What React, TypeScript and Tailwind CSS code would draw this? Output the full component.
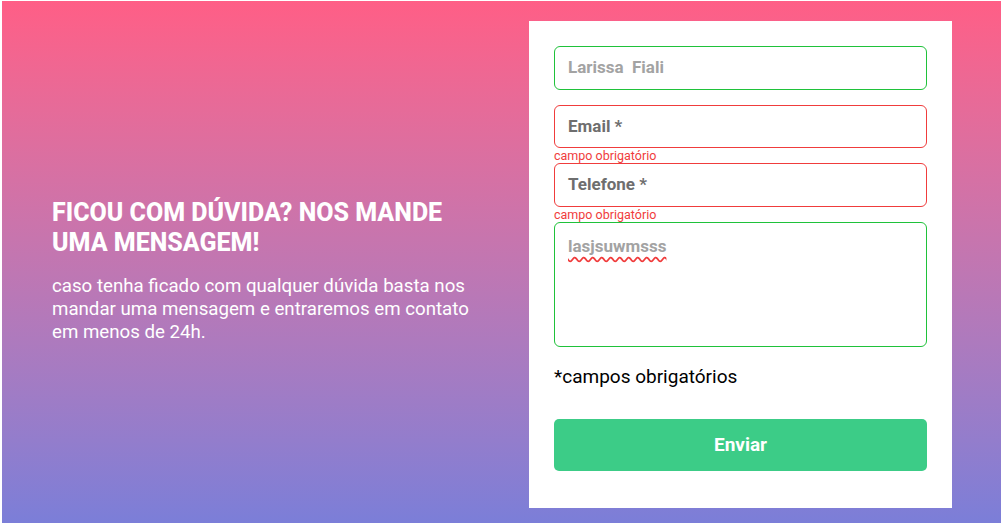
import React from 'react';

const Field = ({ text, tone, error, h = 'h-[44px]' }: { text: string; tone: 'ok' | 'bad'; error?: boolean; h?: string }) => (
  <div>
    <div
      className={`${h} rounded-[6px] border flex items-center pl-[13px] text-[17px] font-bold whitespace-pre ${
        tone === 'ok' ? 'border-[#1fc23a] text-[#a3a3a3]' : 'border-[#f03c3c] text-[#6e6e6e]'
      }`}
    >
      {text}
    </div>
    <div className="h-[15px] text-[12.5px] leading-[15px] text-[#f03c3c]">{error ? 'campo obrigatório' : ''}</div>
  </div>
);

export default function App() {
  return (
    <div className="w-[1001px] h-[523px] bg-white pl-[2px] pt-[1px] font-['Roboto',sans-serif]">
      <div className="h-full flex bg-gradient-to-b from-[#ff5e86] to-[#7b7ed8]">
        <section className="flex-1 flex items-center pl-[50px] pt-[17px]">
          <div className="max-w-[430px] text-white">
            <h2 className="text-[25px] leading-[30px] font-extrabold uppercase mb-[17px]">
              Ficou com dúvida? Nos mande uma mensagem!
            </h2>
            <p className="text-[18.7px] leading-[23px]">
              caso tenha ficado com qualquer dúvida basta nos mandar uma mensagem e entraremos em contato em menos de 24h.
            </p>
          </div>
        </section>

        <form className="w-[423px] mr-[49px] mt-[20px] mb-[15px] bg-white px-[25px] pt-[25px]">
          <Field text="Larissa  Fiali" tone="ok" />
          <Field text="Email *" tone="bad" error h="h-[43px]" />
          <Field text="Telefone *" tone="bad" error />
          <div className="h-[125px] rounded-[6px] border border-[#1fc23a] pl-[13px] pt-[11px] text-[17px] font-bold text-[#a3a3a3]">
            <span className="underline decoration-wavy decoration-[#f03c3c] underline-offset-[4px]">lasjsuwmsss</span>
          </div>
          <p className="mt-[18px] text-[19px] leading-[24px] text-black">*campos obrigatórios</p>
          <button
            type="button"
            className="mt-[30px] w-full h-[52px] rounded-[5px] bg-[#3ccc87] text-white text-[19px] font-bold"
          >
            Enviar
          </button>
        </form>
      </div>
    </div>
  );
}
